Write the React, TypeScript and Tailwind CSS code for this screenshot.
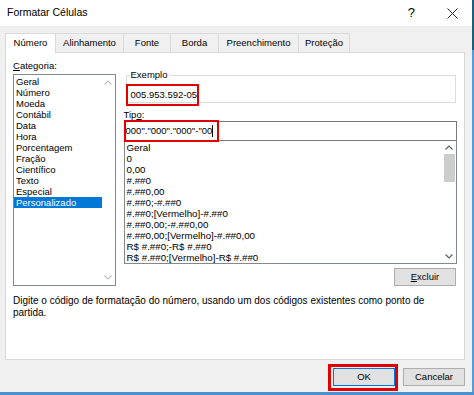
import React from "react";

const categories = [
  "Geral",
  "Número",
  "Moeda",
  "Contábil",
  "Data",
  "Hora",
  "Porcentagem",
  "Fração",
  "Científico",
  "Texto",
  "Especial",
  "Personalizado",
];

const formats = [
  "Geral",
  "0",
  "0,00",
  "#.##0",
  "#.##0,00",
  "#.##0;-#.##0",
  "#.##0;[Vermelho]-#.##0",
  "#.##0,00;-#.##0,00",
  "#.##0,00;[Vermelho]-#.##0,00",
  "R$ #.##0;-R$ #.##0",
  "R$ #.##0;[Vermelho]-R$ #.##0",
];

const tabs = ["Número", "Alinhamento", "Fonte", "Borda", "Preenchimento", "Proteção"];
const tabWidths = ["w-[50px]", "w-[68px]", "w-[47px]", "w-[48px]", "w-[80px]", "w-[52px]"];

function ChevronUp({ color = "#606060" }: { color?: string }) {
  return (
    <svg width="8" height="5" viewBox="0 0 8 5">
      <path d="M0.5 4.5 L4 1 L7.5 4.5" fill="none" stroke={color} strokeWidth="1.2" />
    </svg>
  );
}

function ChevronDown({ color = "#606060" }: { color?: string }) {
  return (
    <svg width="8" height="5" viewBox="0 0 8 5">
      <path d="M0.5 0.5 L4 4 L7.5 0.5" fill="none" stroke={color} strokeWidth="1.2" />
    </svg>
  );
}

export default function App() {
  return (
    <div
      className="w-[474px] h-[395px] overflow-hidden flex flex-col bg-[#f0f0f0] text-[#000]"
      style={{ fontFamily: '"Liberation Sans", Arial, sans-serif' }}
    >
      <div className="flex flex-1 min-h-0">
        <div className="flex flex-col w-[472px]">
          {/* title bar */}
          <div className="h-[26px] bg-white flex items-center pl-[7px] pr-[14px] text-[10.5px]">
            <span className="flex-1">Formatar Células</span>
            <span className="mr-[32px] text-[13px]">?</span>
            <svg width="11" height="11" viewBox="0 0 11 11">
              <path d="M0.5 0.5 L10.5 10.5 M10.5 0.5 L0.5 10.5" stroke="#222" strokeWidth="1" />
            </svg>
          </div>

          {/* tabs */}
          <div className="flex pl-[5px] mt-[7px] h-[19px] text-[9.5px]">
            {tabs.map((t, i) => (
              <div
                key={t}
                className={`${tabWidths[i]} flex items-center justify-center border-t border-l border-[#d9d9d9] ${
                  i === tabs.length - 1 ? "border-r" : ""
                } ${i === 0 ? "bg-white h-[20px] relative z-10" : "bg-[#f0f0f0]"}`}
              >
                {t}
              </div>
            ))}
          </div>

          {/* panel */}
          <div className="ml-[5px] w-[460px] h-[308px] bg-white border border-[#d9d9d9] px-[7px] pt-[6px] text-[9.5px]">
            <div className="flex gap-[8px]">
              {/* left */}
              <div className="w-[103px] flex flex-col">
                <div className="h-[13px] leading-[13px]">
                  <span className="underline">C</span>ategoria:
                </div>
                <div className="mt-[2px] h-[212px] border border-[#828790] flex">
                  <div className="flex-1 flex flex-col pt-[1px]">
                    {categories.map((c) => (
                      <div
                        key={c}
                        className={`h-[11px] leading-[11px] pl-[2px] ${
                          c === "Personalizado" ? "bg-[#0078d7] text-white" : ""
                        }`}
                      >
                        {c}
                      </div>
                    ))}
                  </div>
                  <div className="w-[13px] flex flex-col items-center justify-between py-[5px]">
                    <ChevronUp color="#c0c0c0" />
                    <ChevronDown color="#c0c0c0" />
                  </div>
                </div>
              </div>

              {/* right */}
              <div className="w-[335px] flex flex-col pt-[16px]">
                <div className="relative ml-[2px] mr-[1px] h-[28px] border border-[#dcdcdc]">
                  <span className="absolute left-[3px] -top-[7px] bg-white px-[1px] leading-[12px]">
                    Exemplo
                  </span>
                  <div className="mt-[8px] -ml-[1px] w-[73px] h-[22px] border-2 border-[#e00000] flex items-center pl-[3px] whitespace-nowrap">
                    005.953.592-05
                  </div>
                </div>

                <div className="mt-[5px] h-[13px] leading-[13px]">
                  Tip<span className="underline">o</span>:
                </div>
                <div className="relative h-[20px] border border-[#7a7a7a] flex items-center pl-[1px] whitespace-nowrap">
                  <span>000"."000"."000"-"00</span>
                  <span className="w-[1px] h-[12px] bg-black" />
                  <div className="absolute -left-[1px] -top-[2px] w-[95px] h-[22px] border-2 border-[#e00000]" />
                </div>
                <div className="h-[123px] border border-t-0 border-[#828790] flex">
                  <div className="flex-1 flex flex-col pt-[1px] pl-[2px] text-[9.75px]">
                    {formats.map((f) => (
                      <div key={f} className="h-[11px] leading-[11px] whitespace-nowrap">
                        {f}
                      </div>
                    ))}
                  </div>
                  <div className="w-[14px] flex flex-col items-center py-[4px]">
                    <ChevronUp />
                    <div className="mt-[4px] w-[11px] h-[28px] bg-[#cdcdcd]" />
                    <div className="flex-1" />
                    <ChevronDown />
                  </div>
                </div>
                <div className="flex justify-end mt-[4px] mr-[1px]">
                  <button className="w-[62px] h-[18px] bg-[#e1e1e1] border border-[#adadad] flex items-center justify-center">
                    <span className="underline">E</span>xcluir
                  </button>
                </div>
              </div>
            </div>

            <div className="mt-[9px] leading-[12px] w-[440px] text-[10px]">
              Digite o código de formatação do número, usando um dos códigos existentes como ponto de
              <br />
              partida.
            </div>
          </div>

          {/* buttons */}
          <div className="flex justify-end gap-[8px] pr-[7px] mt-[8px] text-[9.5px]">
            <div className="relative">
              <div className="absolute -left-[5px] -right-[3px] -top-[4px] -bottom-[5px] border-[3px] border-[#e00000]" />
              <button className="w-[62px] h-[18px] bg-[#e1e1e1] border border-[#0078d7] flex items-center justify-center">
                OK
              </button>
            </div>
            <button className="w-[62px] h-[18px] bg-[#e1e1e1] border border-[#adadad] flex items-center justify-center">
              Cancelar
            </button>
          </div>
        </div>
        <div className="flex-1 flex flex-col">
          <div className="h-[50px] bg-[#1d5f78]" />
          <div className="flex-1 bg-[#5b9bd5]" />
        </div>
      </div>
      <div className="h-[3px] bg-[#4a90d0]" />
    </div>
  );
}
